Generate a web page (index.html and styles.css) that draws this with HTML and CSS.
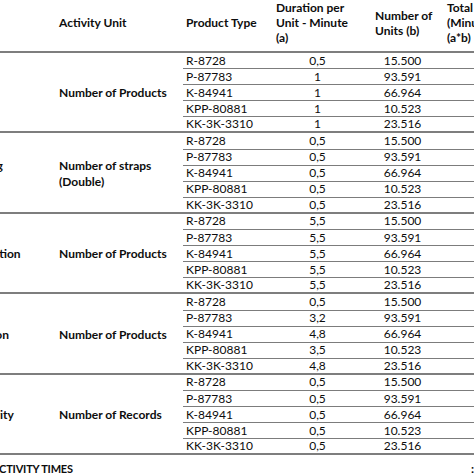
FILE: index.html
```html
<!DOCTYPE html>
<html>
<head>
<meta charset="utf-8">
<link rel="stylesheet" href="styles.css">
</head>
<body>
<div class="frame">
<table class="times">
  <colgroup>
    <col class="c-act"><col class="c-unit"><col class="c-prod"><col class="c-dur"><col class="c-num"><col class="c-tot">
  </colgroup>
  <thead>
    <tr>
      <th class="h-act">Task</th>
      <th class="h-unit">Activity Unit</th>
      <th class="h-prod">Product Type</th>
      <th class="h-dur">Duration per<br>Unit - Minute<br>(a)</th>
      <th class="h-num">Number of<br>Units (b)</th>
      <th class="h-tot">Total<br>(Minute)<br>(a*b)</th>
    </tr>
  </thead>
  <tbody class="grp">
    <tr><td class="act" rowspan="5">Scan</td><td class="unit" rowspan="5">Number of Products</td><td class="prod">R-8728</td><td class="dur">0,5</td><td class="num">15.500</td><td class="tot">7.750</td></tr>
    <tr><td class="prod">P-87783</td><td class="dur">1</td><td class="num">93.591</td><td class="tot">93.591</td></tr>
    <tr><td class="prod">K-84941</td><td class="dur">1</td><td class="num">66.964</td><td class="tot">66.964</td></tr>
    <tr><td class="prod">KPP-80881</td><td class="dur">1</td><td class="num">10.523</td><td class="tot">10.523</td></tr>
    <tr class="last"><td class="prod">KK-3K-3310</td><td class="dur">1</td><td class="num">23.516</td><td class="tot">23.516</td></tr>
  </tbody>
  <tbody class="grp">
    <tr><td class="act" rowspan="5">Banding<br>Job</td><td class="unit" rowspan="5">Number of straps<br>(Double)</td><td class="prod">R-8728</td><td class="dur">0,5</td><td class="num">15.500</td><td class="tot">7.750</td></tr>
    <tr><td class="prod">P-87783</td><td class="dur">0,5</td><td class="num">93.591</td><td class="tot">46.796</td></tr>
    <tr><td class="prod">K-84941</td><td class="dur">0,5</td><td class="num">66.964</td><td class="tot">33.482</td></tr>
    <tr><td class="prod">KPP-80881</td><td class="dur">0,5</td><td class="num">10.523</td><td class="tot">5.262</td></tr>
    <tr class="last"><td class="prod">KK-3K-3310</td><td class="dur">0,5</td><td class="num">23.516</td><td class="tot">11.758</td></tr>
  </tbody>
  <tbody class="grp">
    <tr><td class="act" rowspan="5">Label Insertion</td><td class="unit" rowspan="5">Number of Products</td><td class="prod">R-8728</td><td class="dur">5,5</td><td class="num">15.500</td><td class="tot">85.250</td></tr>
    <tr><td class="prod">P-87783</td><td class="dur">5,5</td><td class="num">93.591</td><td class="tot">514.751</td></tr>
    <tr><td class="prod">K-84941</td><td class="dur">5,5</td><td class="num">66.964</td><td class="tot">368.302</td></tr>
    <tr><td class="prod">KPP-80881</td><td class="dur">5,5</td><td class="num">10.523</td><td class="tot">57.877</td></tr>
    <tr class="last"><td class="prod">KK-3K-3310</td><td class="dur">5,5</td><td class="num">23.516</td><td class="tot">129.338</td></tr>
  </tbody>
  <tbody class="grp">
    <tr><td class="act" rowspan="5">Inspection</td><td class="unit" rowspan="5">Number of Products</td><td class="prod">R-8728</td><td class="dur">0,5</td><td class="num">15.500</td><td class="tot">7.750</td></tr>
    <tr><td class="prod">P-87783</td><td class="dur">3,2</td><td class="num">93.591</td><td class="tot">299.491</td></tr>
    <tr><td class="prod">K-84941</td><td class="dur">4,8</td><td class="num">66.964</td><td class="tot">321.427</td></tr>
    <tr><td class="prod">KPP-80881</td><td class="dur">3,5</td><td class="num">10.523</td><td class="tot">36.831</td></tr>
    <tr class="last"><td class="prod">KK-3K-3310</td><td class="dur">4,8</td><td class="num">23.516</td><td class="tot">112.877</td></tr>
  </tbody>
  <tbody class="grp">
    <tr><td class="act" rowspan="5">Productivity</td><td class="unit" rowspan="5">Number of Records</td><td class="prod">R-8728</td><td class="dur">0,5</td><td class="num">15.500</td><td class="tot">7.750</td></tr>
    <tr><td class="prod">P-87783</td><td class="dur">0,5</td><td class="num">93.591</td><td class="tot">46.796</td></tr>
    <tr><td class="prod">K-84941</td><td class="dur">0,5</td><td class="num">66.964</td><td class="tot">33.482</td></tr>
    <tr><td class="prod">KPP-80881</td><td class="dur">0,5</td><td class="num">10.523</td><td class="tot">5.262</td></tr>
    <tr class="last"><td class="prod">KK-3K-3310</td><td class="dur">0,5</td><td class="num">23.516</td><td class="tot">11.758</td></tr>
  </tbody>
  <tfoot>
    <tr><td class="foot-label" colspan="5">TOTAL ACTIVITY TIMES</td><td class="foot-val">: 2.356.017</td></tr>
  </tfoot>
</table>
</div>
</body>
</html>
```

FILE: styles.css
```css
html, body {
  margin: 0;
  padding: 0;
  background: #ffffff;
}

.frame {
  width: 474px;
  height: 474px;
  overflow: hidden;
}

.times {
  margin-left: -92px;
  width: 650px;
  table-layout: fixed;
  border-collapse: separate;
  border-spacing: 0;
  font-family: Lato, "Liberation Sans", sans-serif;
  font-size: 12px;
  color: #0d0d0d;
}

.c-act { width: 146px; }
.c-unit { width: 129px; }
.c-prod { width: 87px; }
.c-dur { width: 95px; }
.c-num { width: 75px; }
.c-tot { width: 118px; }

thead tr { height: 52px; }

th {
  padding: 0 0 6px 0;
  font-weight: 700;
  line-height: 15px;
  text-align: left;
  vertical-align: middle;
  border-bottom: 2px solid #7e7e7e;
  white-space: nowrap;
}

.h-act { text-align: center; }
.h-unit { padding-left: 5px; }
.h-prod { padding-left: 3px; }
.h-dur { padding-left: 6px; }
.h-num { padding-left: 10px; }
.h-tot { padding-left: 7px; }

tbody tr { height: 16.1px; }

td {
  padding: 0;
  line-height: 14px;
  white-space: nowrap;
  overflow: hidden;
  vertical-align: middle;
}

td.act {
  font-weight: 700;
  text-align: center;
  line-height: 16px;
  padding-top: 2px;
  border-bottom: 2px solid #7e7e7e;
}

td.unit {
  font-weight: 700;
  padding-left: 5px;
  padding-top: 2px;
  line-height: 16px;
  border-bottom: 2px solid #7e7e7e;
}

td.prod,
td.dur,
td.num,
td.tot {
  border-bottom: 1px solid #7c7c7c;
}

tr.last td.prod,
tr.last td.dur,
tr.last td.num,
tr.last td.tot {
  border-bottom: 2px solid #7e7e7e;
}

td.prod { padding-left: 3px; }
td.dur { text-align: center; }
td.num { text-align: center; }
td.tot { text-align: center; }

.foot-label {
  font-weight: 700;
  font-size: 11px;
  letter-spacing: -0.2px;
  padding-top: 7px;
  padding-left: 49px;
  line-height: 14px;
}

.foot-val {
  font-weight: 700;
  padding-top: 7px;
  padding-left: 31px;
  line-height: 14px;
}
```
